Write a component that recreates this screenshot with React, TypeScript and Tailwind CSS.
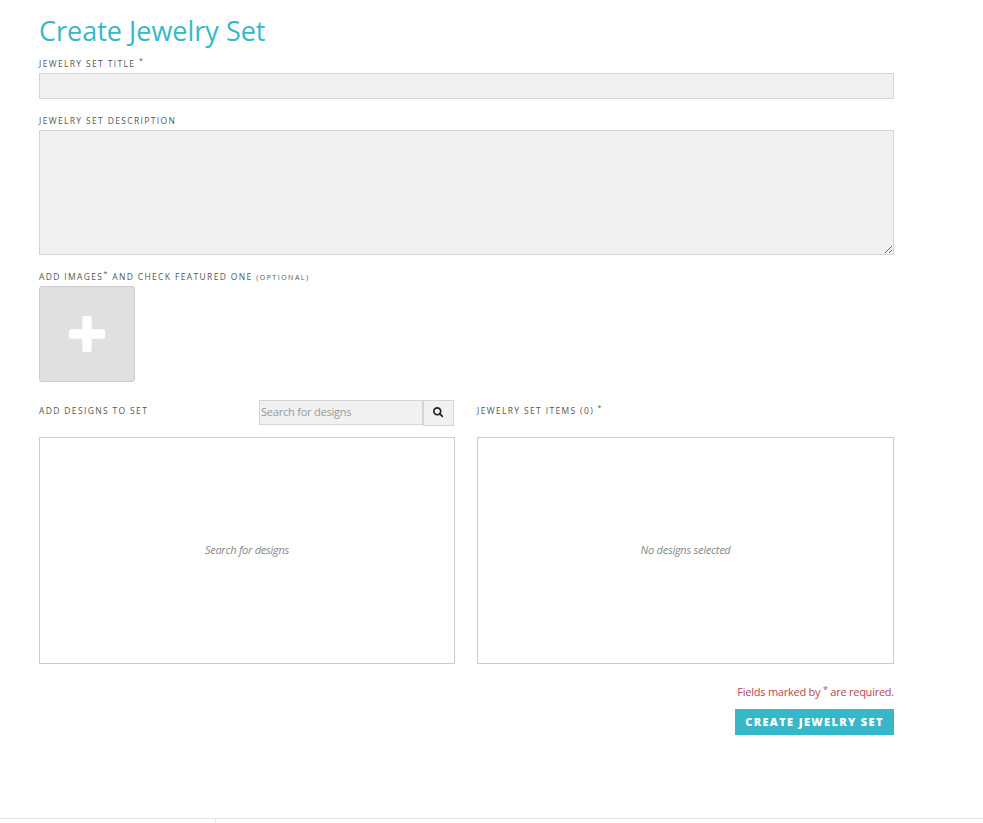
import React, { useState } from 'react';
import { FaSearch } from 'react-icons/fa';

interface FieldLabelProps {
  htmlFor?: string;
  className?: string;
  children: React.ReactNode;
}

const FieldLabel: React.FC<FieldLabelProps> = ({ htmlFor, className = '', children }) => (
  <label
    htmlFor={htmlFor}
    className={`block h-4 text-[8.5px] leading-[18px] tracking-[1.35px] uppercase whitespace-nowrap text-[#555] ${className}`}
  >
    {children}
  </label>
);

const Required = () => <sup className="text-[7px] -top-[4px]">*</sup>;

const DesignBox: React.FC<{ message: string }> = ({ message }) => (
  <div className="h-[227px] border border-[#ccc] flex items-center justify-center text-[11px] tracking-[-0.25px] italic text-[#888]">
    {message}
  </div>
);

export default function App() {
  const [title, setTitle] = useState('');
  const [description, setDescription] = useState('');
  const [query, setQuery] = useState('');

  return (
    <div className="h-[823px] overflow-hidden bg-white font-['Open_Sans',sans-serif] flex flex-col">
      <form className="ml-[39px] w-[855px] pt-[13px]" onSubmit={e => e.preventDefault()}>
        <h1 className="h-[42px] text-[27px] leading-[36px] text-[#37b8c8]">Create Jewelry Set</h1>

        <FieldLabel htmlFor="title">Jewelry Set Title <Required /></FieldLabel>
        <input
          id="title"
          type="text"
          className="block mt-0.5 w-full h-[26px] px-1 text-[11px] border border-[#d5d5d5] bg-[#f1f1f1] outline-none"
          value={title}
          onChange={e => setTitle(e.target.value)}
        />

        <FieldLabel htmlFor="description" className="mt-[13px]">Jewelry Set Description</FieldLabel>
        <textarea
          id="description"
          className="block mt-0.5 w-full h-[125px] px-1 text-[11px] border border-[#d5d5d5] bg-[#f1f1f1] outline-none"
          value={description}
          onChange={e => setDescription(e.target.value)}
        />

        <FieldLabel className="mt-[13px]">
          Add Images<Required /> and check featured one{' '}
          <span className="text-[7px] tracking-[1.5px]">(optional)</span>
        </FieldLabel>
        <button
          type="button"
          aria-label="Add image"
          className="mt-0.5 w-24 h-24 rounded-[3px] border border-[#ccc] bg-[#e0e0e0] flex items-center justify-center text-white"
        >
          <svg width="36" height="36" viewBox="0 0 36 36" fill="currentColor">
            <rect x="13.3" width="9.4" height="36" rx="2.5" />
            <rect y="13.3" width="36" height="9.4" rx="2.5" />
          </svg>
        </button>

        <div className="mt-[18px] flex justify-between">
          {/* Search column */}
          <div className="w-[416px]">
            <div className="h-[37px] flex items-start justify-between pr-px">
              <FieldLabel htmlFor="search" className="mt-0.5">Add Designs to Set</FieldLabel>
              <div className="flex items-start">
                <input
                  id="search"
                  type="text"
                  placeholder="Search for designs"
                  className="w-[164px] h-[25px] pl-px pb-[3px] text-[11px] tracking-[-0.22px] border border-[#d5d5d5] bg-[#f1f1f1] placeholder-[#999] outline-none"
                  value={query}
                  onChange={e => setQuery(e.target.value)}
                />
                <button
                  type="button"
                  aria-label="Search"
                  className="w-[31px] h-[26px] pr-px pb-px border border-[#d5d5d5] bg-[#f1f1f1] text-[#222] flex items-center justify-center"
                >
                  <FaSearch size={10.5} />
                </button>
              </div>
            </div>
            <DesignBox message="Search for designs" />
          </div>

          {/* Selected items column */}
          <div className="w-[417px]">
            <div className="h-[37px]">
              <FieldLabel className="pt-0.5">Jewelry Set Items (0) <Required /></FieldLabel>
            </div>
            <DesignBox message="No designs selected" />
          </div>
        </div>

        <div className="mt-5 flex flex-col items-end">
          <p className="h-[25px] text-[11px] leading-4 tracking-[-0.24px] text-[#b5494f]">
            Fields marked by <sup className="text-[9px] -top-[3px]">*</sup> are required.
          </p>
          <button
            type="submit"
            className="w-[159px] h-[26px] bg-[#37b8c8] text-white text-[11px] font-extrabold tracking-[1.35px] uppercase whitespace-nowrap"
          >
            Create Jewelry Set
          </button>
        </div>
      </form>

      <footer className="mt-auto h-[5px] shrink-0 border-t border-[#e5e5e5]">
        <div className="w-[216px] h-full border-r border-[#e5e5e5]" />
      </footer>
    </div>
  );
}
